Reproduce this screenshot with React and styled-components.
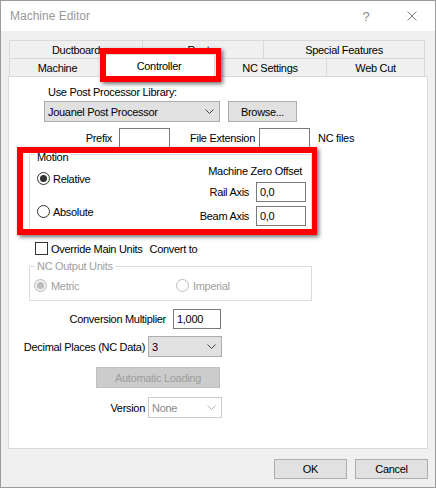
import React from 'react';
import styled, { createGlobalStyle } from 'styled-components';

const GlobalStyle = createGlobalStyle`
  html, body {
    margin: 0;
    padding: 0;
    background: #fff;
  }
  body {
    font-family: "Liberation Sans", Arial, sans-serif;
    font-size: 11px;
    letter-spacing: -0.3px;
    color: #000;
  }
  * {
    box-sizing: border-box;
  }
`;

const Window = styled.div`
  width: 436px;
  height: 488px;
  border: 1px solid #9b9b9b;
  background: #f0f0f0;
  display: flex;
  flex-direction: column;
`;

const TitleBar = styled.div`
  flex: none;
  height: 30px;
  display: flex;
  align-items: center;
  background: #fff;
  padding-left: 9px;
`;

const Title = styled.span`
  flex: 1;
  font-size: 12px;
  letter-spacing: 0;
  color: #999;
`;

const CaptionButton = styled.div`
  width: 46px;
  height: 30px;
  display: flex;
  align-items: center;
  justify-content: center;
  font-size: 13px;
  letter-spacing: 0;
  color: #8a8a8a;
`;

const Body = styled.div`
  position: relative;
  flex: 1;
  padding: 9px 7px 0 7px;
`;

const Tabs = styled.div`
  margin-left: 1px;
  width: 416px;
`;

const TabRow = styled.div`
  display: flex;
  height: 18px;
`;

const Tab = styled.div`
  flex: none;
  width: ${p => p.$w}px;
  display: flex;
  align-items: center;
  justify-content: center;
  border-top: 1px solid #d9d9d9;
  border-left: 1px solid #d9d9d9;
  background: #f0f0f0;
  white-space: nowrap;
  &:last-child {
    border-right: 1px solid #d9d9d9;
  }
`;

const ActiveTab = styled(Tab)`
  position: relative;
  z-index: 1;
  width: ${p => p.$w + 4}px;
  height: 23px;
  margin: -4px -2px 0;
  padding-bottom: 1px;
  background: #fff;
  border: 1px solid #d9d9d9;
  border-bottom: none;
`;

const Page = styled.div`
  width: 420px;
  height: 373px;
  background: #fff;
  border: 1px solid #d9d9d9;
`;

const Row = styled.div`
  display: flex;
  align-items: center;
  height: ${p => p.$h || 13}px;
  margin-top: ${p => p.$top || 0}px;
  padding-left: ${p => p.$left || 0}px;
  white-space: nowrap;
`;

const FieldLabel = styled.span`
  flex: none;
  width: ${p => p.$w}px;
  margin-right: ${p => p.$gap}px;
  text-align: right;
  white-space: nowrap;
`;

const TextBox = styled.input`
  flex: none;
  width: ${p => p.$w}px;
  height: 20px;
  margin: 0;
  padding: 0 3px;
  border: 1px solid #7a7a7a;
  background: #fff;
  font: inherit;
  letter-spacing: inherit;
  color: #000;
  outline: none;
`;

const Combo = styled.div`
  flex: none;
  width: ${p => p.$w}px;
  height: 21px;
  display: flex;
  align-items: center;
  justify-content: space-between;
  padding: 0 5px 0 3px;
  background: ${p => (p.$disabled ? '#fff' : '#e1e1e1')};
  border: 1px solid ${p => (p.$disabled ? '#cccccc' : '#adadad')};
  color: ${p => (p.$disabled ? '#8a8a8a' : '#000')};
`;

const Button = styled.button`
  flex: none;
  width: ${p => p.$w}px;
  height: ${p => p.$h || 21}px;
  margin: 0 0 0 ${p => p.$gap || 0}px;
  padding: 0;
  font: inherit;
  letter-spacing: inherit;
  color: #000;
  background: #e1e1e1;
  border: 1px solid #adadad;
  &:disabled {
    color: #9d9d9d;
    background: #cccccc;
    border-color: #bfbfbf;
  }
`;

const GroupBox = styled.fieldset`
  width: 283px;
  margin: ${p => p.$top}px 0 0 20px;
  padding: 0;
  min-width: 0;
  border: 1px solid #dcdcdc;
`;

// $drop pushes the caption text below the frame line
const Legend = styled.legend`
  margin-left: 5px;
  padding: ${p => p.$drop || 0}px 2px 0;
  line-height: 13px;
  color: ${p => (p.$disabled ? '#a0a0a0' : '#000')};
`;

const MotionBody = styled.div`
  height: 65px;
  display: flex;
  justify-content: space-between;
`;

const RadioColumn = styled.div`
  display: flex;
  flex-direction: column;
  gap: 20px;
  padding: 8px 0 0 7px;
`;

const OffsetColumn = styled.div`
  display: flex;
  flex-direction: column;
  align-items: flex-end;
  gap: 4px;
  padding: 1px 5px 0 0;
`;

const OffsetTitle = styled.span`
  line-height: 13px;
  margin-right: 4px;
`;

const OffsetRow = styled.div`
  display: flex;
  align-items: center;
`;

const Option = styled.label`
  display: flex;
  align-items: center;
  height: 13px;
  gap: ${p => p.$gap || 3}px;
  color: ${p => (p.$disabled ? '#a0a0a0' : '#000')};
`;

const RadioMark = styled.span`
  flex: none;
  width: 13px;
  height: 13px;
  border-radius: 50%;
  display: flex;
  align-items: center;
  justify-content: center;
  border: 1px solid ${p => (p.$disabled ? '#bcbcbc' : '#333')};
  background: ${p => (p.$disabled && p.$checked ? '#efefef' : '#fff')};
  &::after {
    content: '';
    display: ${p => (p.$checked ? 'block' : 'none')};
    width: 7px;
    height: 7px;
    border-radius: 50%;
    background: ${p => (p.$disabled ? '#bcbcbc' : '#333')};
  }
`;

const CheckMark = styled.span`
  flex: none;
  width: 13px;
  height: 13px;
  border: 1px solid #333;
  background: #fff;
`;

const UnitsBody = styled.div`
  height: 27px;
  display: grid;
  grid-template-columns: 142px auto;
  align-items: start;
  padding: 6px 0 0 4px;
`;

const Footer = styled.div`
  display: flex;
  justify-content: flex-end;
  margin-top: 10px;
`;

// red frames drawn over the dialog
const Callout = styled.div`
  position: absolute;
  z-index: 5;
  left: ${p => p.$x}px;
  top: ${p => p.$y}px;
  width: ${p => p.$w}px;
  height: ${p => p.$h}px;
  border: solid #ff0000;
  border-width: 6px 5px 6px 6px;
  box-shadow: 2px 2px 4px rgba(0, 0, 0, 0.55);
  pointer-events: none;
`;

const Chevron = ({ color = '#444' }) => (
  <svg width="9" height="5" viewBox="0 0 9 5">
    <path d="M0.5 0.5 L4.5 4.5 L8.5 0.5" fill="none" stroke={color} strokeWidth="1" />
  </svg>
);

const CloseGlyph = () => (
  <svg width="10" height="10" viewBox="0 0 10 10">
    <path d="M0.5 0.5 L9.5 9.5 M9.5 0.5 L0.5 9.5" stroke="#7a7a7a" strokeWidth="1" />
  </svg>
);

const Radio = ({ checked, disabled, gap, children }) => (
  <Option $disabled={disabled} $gap={gap}>
    <RadioMark $checked={checked} $disabled={disabled} />
    {children}
  </Option>
);

const topTabs = [
  { label: 'Ductboard', w: 133 },
  { label: 'Router', w: 121 },
  { label: 'Special Features', w: 162 },
];

const bottomTabs = [
  { label: 'Machine', w: 96 },
  { label: 'Controller', w: 108, active: true },
  { label: 'NC Settings', w: 113 },
  { label: 'Web Cut', w: 99 },
];

export default function App() {
  return (
    <>
      <GlobalStyle />
      <Window>
        <TitleBar>
          <Title>Machine Editor</Title>
          <CaptionButton>?</CaptionButton>
          <CaptionButton>
            <CloseGlyph />
          </CaptionButton>
        </TitleBar>

        <Body>
          <Tabs>
            <TabRow>
              {topTabs.map(t => (
                <Tab key={t.label} $w={t.w}>{t.label}</Tab>
              ))}
            </TabRow>
            <TabRow>
              {bottomTabs.map(t =>
                t.active ? (
                  <ActiveTab key={t.label} $w={t.w}>{t.label}</ActiveTab>
                ) : (
                  <Tab key={t.label} $w={t.w}>{t.label}</Tab>
                )
              )}
            </TabRow>
          </Tabs>

          <Page>
            <Row $top={8} $left={39}>Use Post Processor Library:</Row>
            <Row $top={3} $left={35} $h={21}>
              <Combo $w={176}>
                <span>Jouanel Post Processor</span>
                <Chevron />
              </Combo>
              <Button $w={69} $gap={8}>Browse...</Button>
            </Row>
            <Row $top={6} $h={20}>
              <FieldLabel $w={103} $gap={7}>Prefix</FieldLabel>
              <TextBox $w={51} readOnly defaultValue="" />
              <FieldLabel $w={85} $gap={4}>File Extension</FieldLabel>
              <TextBox $w={51} readOnly defaultValue="" />
              <span style={{ marginLeft: 8 }}>NC files</span>
            </Row>

            <GroupBox $top={-3}>
              <Legend $drop={6}>Motion</Legend>
              <MotionBody>
                <RadioColumn>
                  <Radio checked>Relative</Radio>
                  <Radio>Absolute</Radio>
                </RadioColumn>
                <OffsetColumn>
                  <OffsetTitle>Machine Zero Offset</OffsetTitle>
                  <OffsetRow>
                    <FieldLabel $w={80} $gap={7}>Rail Axis</FieldLabel>
                    <TextBox $w={50} readOnly defaultValue="0,0" />
                  </OffsetRow>
                  <OffsetRow>
                    <FieldLabel $w={80} $gap={7}>Beam Axis</FieldLabel>
                    <TextBox $w={50} readOnly defaultValue="0,0" />
                  </OffsetRow>
                </OffsetColumn>
              </MotionBody>
            </GroupBox>

            <Row $top={12} $left={26}>
              <Option>
                <CheckMark />
                Override Main Units
              </Option>
              <span style={{ marginLeft: 7 }}>Convert to</span>
            </Row>

            <GroupBox $top={5}>
              <Legend $disabled>NC Output Units</Legend>
              <UnitsBody>
                <Radio checked disabled gap={4}>Metric</Radio>
                <Radio disabled gap={4}>Imperial</Radio>
              </UnitsBody>
            </GroupBox>

            <Row $top={8} $h={20}>
              <FieldLabel $w={157} $gap={7}>Conversion Multiplier</FieldLabel>
              <TextBox $w={48} readOnly defaultValue="1,000" />
            </Row>
            <Row $top={7} $h={21}>
              <FieldLabel $w={136} $gap={3}>Decimal Places (NC Data)</FieldLabel>
              <Combo $w={74}>
                <span>3</span>
                <Chevron />
              </Combo>
            </Row>
            <Row $top={10} $left={87} $h={21}>
              <Button $w={124} disabled>Automatic Loading</Button>
            </Row>
            <Row $top={9} $h={21}>
              <FieldLabel $w={136} $gap={3}>Version</FieldLabel>
              <Combo $w={74} $disabled>
                <span>None</span>
                <Chevron color="#b5b5b5" />
              </Combo>
            </Row>
          </Page>

          <Footer>
            <Button $w={73} $h={20}>OK</Button>
            <Button $w={73} $h={20} $gap={8}>Cancel</Button>
          </Footer>

          <Callout $x={99} $y={17} $w={121} $h={34} />
          <Callout $x={16} $y={116} $w={300} $h={88} />
        </Body>
      </Window>
    </>
  );
}
